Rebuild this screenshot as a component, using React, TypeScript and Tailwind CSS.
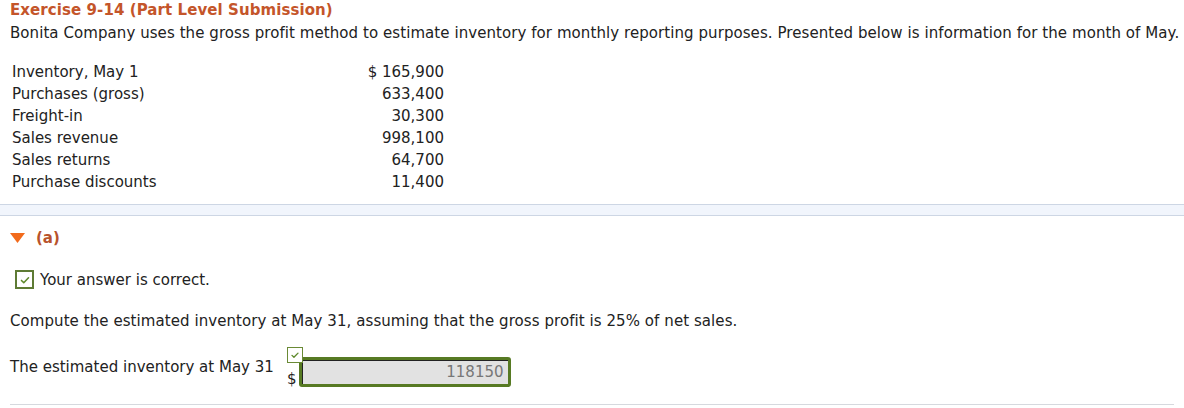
import type { ReactElement } from "react";

const rows: [string, string][] = [
  ["Inventory, May 1", "$ 165,900"],
  ["Purchases (gross)", "633,400"],
  ["Freight-in", "30,300"],
  ["Sales revenue", "998,100"],
  ["Sales returns", "64,700"],
  ["Purchase discounts", "11,400"],
];

function Check({ size }: { size: number }): ReactElement {
  return (
    <svg width={size} height={size} viewBox="0 0 16 16" fill="none">
      <path d="M4 8.5l2.6 2.6L12 5.5" stroke="#5f8a2c" strokeWidth="1.8" strokeLinecap="round" strokeLinejoin="round" />
    </svg>
  );
}

export default function App(): ReactElement {
  return (
    <div className="w-[1184px] h-[408px] overflow-hidden bg-white font-['DejaVu_Sans',Verdana,sans-serif] text-[15px] text-[#222]">
      <div className="px-[10px] pt-[1px]">
        <h1 className="text-[15px] font-bold tracking-[0.08px] text-[#c4552a] leading-[18px]">
          Exercise 9-14 (Part Level Submission)
        </h1>
        <p className="mt-[5px] leading-[18px] tracking-[0.07px] whitespace-nowrap">
          Bonita Company uses the gross profit method to estimate inventory for monthly reporting purposes. Presented below is
          information for the month of May.
        </p>
        <table className="mt-[19px] ml-[2px] w-[432px]">
          <tbody>
            {rows.map(([label, value]) => (
              <tr key={label} className="h-[22px]">
                <td className="p-0 leading-[22px]">{label}</td>
                <td className="p-0 text-right leading-[22px]">{value}</td>
              </tr>
            ))}
          </tbody>
        </table>
      </div>

      <div className="mt-[11px] h-[12px] border-y border-[#cdd6e4] bg-[#f1f5fc]" />

      <div className="px-[10px]">
        <div className="mt-[13px] flex h-[18px] items-center gap-[11px]">
          <svg width="15" height="10" viewBox="0 0 15 10">
            <polygon points="0,0 15,0 7.5,10" fill="#f26a1b" />
          </svg>
          <span className="text-[15px] font-bold leading-[18px] text-[#b8532b]">(a)</span>
        </div>

        <div className="mt-[23px] ml-[5px] flex h-[19px] items-center gap-[6px]">
          <span className="flex h-[19px] w-[19px] items-center justify-center border-2 border-[#5e7b34] bg-white">
            <Check size={14} />
          </span>
          <span className="leading-[18px]">Your answer is correct.</span>
        </div>

        <p className="mt-[23px] leading-[18px] tracking-[0.07px]">
          Compute the estimated inventory at May 31, assuming that the gross profit is 25% of net sales.
        </p>

        <div className="mt-[17px] flex items-start">
          <span className="mt-[11px] w-[277px] leading-[18px]">The estimated inventory at May 31</span>
          <div className="relative flex items-end">
            <span className="absolute left-0 top-0 flex h-[16px] w-[16px] items-center justify-center border border-[#6a8a35] bg-white">
              <Check size={12} />
            </span>
            <span className="mr-[2px] leading-[16px]">$</span>
            <div className="mt-[10px] flex h-[30px] w-[212px] items-center justify-end rounded-[3px] border-[3px] border-[#577a23] bg-[#e2e2e2] pr-[4px] text-[#777] shadow-[inset_1px_1px_0_#222]">
              118150
            </div>
          </div>
        </div>

        <div className="mt-[17px] border-t border-[#d6d9de]" />
      </div>
    </div>
  );
}
